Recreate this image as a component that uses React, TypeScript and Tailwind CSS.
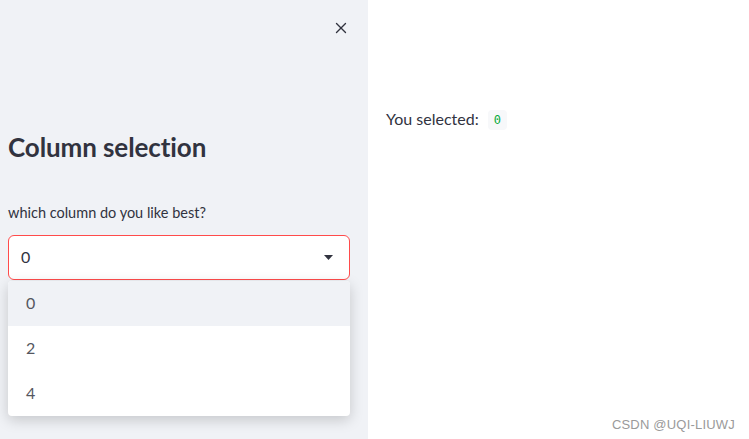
import { X } from "lucide-react";

const OPTIONS = ["0", "2", "4"];

export default function App() {
  return (
    <div className="flex h-[439px] w-[749px] overflow-hidden bg-white font-['Lato',sans-serif] text-[#31333f]">
      {/* sidebar */}
      <aside className="relative flex w-[368px] shrink-0 flex-col bg-[#f0f2f6] pl-2 pr-[18px]">
        <div className="flex justify-end pt-[19px] pr-0">
          <X size={18} strokeWidth={1.8} className="text-[#31333f]" />
        </div>
        <h2 className="mt-[97px] text-[26px] font-bold leading-none tracking-[-0.1px]">Column selection</h2>
        <label className="mt-[46px] text-[14.5px] leading-none">which column do you like best?</label>
        <div className="relative mt-[14px]">
          <div className="flex h-[45px] items-center justify-between rounded-[6px] border border-[#ff4b4b] bg-white pl-[12px] pr-[16px] text-[16px]">
            <span>0</span>
            <svg width="9" height="5" viewBox="0 0 9 5">
              <path d="M0 0h9L4.5 5z" fill="#31333f" />
            </svg>
          </div>
          <ul className="absolute left-0 right-0 top-[46px] overflow-hidden rounded-[4px] bg-white text-[16px] text-[#55575f] shadow-[0_4px_14px_rgba(0,0,0,0.18)]">
            {OPTIONS.map((o, i) => (
              <li
                key={o}
                className={`flex h-[45px] items-center pl-[18px] ${i === 0 ? "bg-[#f0f2f6]" : ""}`}
              >
                {o}
              </li>
            ))}
          </ul>
        </div>
      </aside>

      {/* main */}
      <main className="relative flex-1 pl-[18px]">
        <p className="mt-[107px] flex items-center text-[16px] leading-none">
          You selected:
          <code className="ml-[9px] mt-[3px] rounded-[4px] bg-[#f7f8fa] px-[6px] py-[4px] font-['DejaVu_Sans_Mono',monospace] text-[12px] text-[#09ab3b]">
            0
          </code>
        </p>
        <span className="absolute bottom-[5px] right-[14px] font-['Liberation_Sans',sans-serif] text-[13px] tracking-[0.2px] text-[#9a9a9a]">
          CSDN @UQI-LIUWJ
        </span>
      </main>
    </div>
  );
}
